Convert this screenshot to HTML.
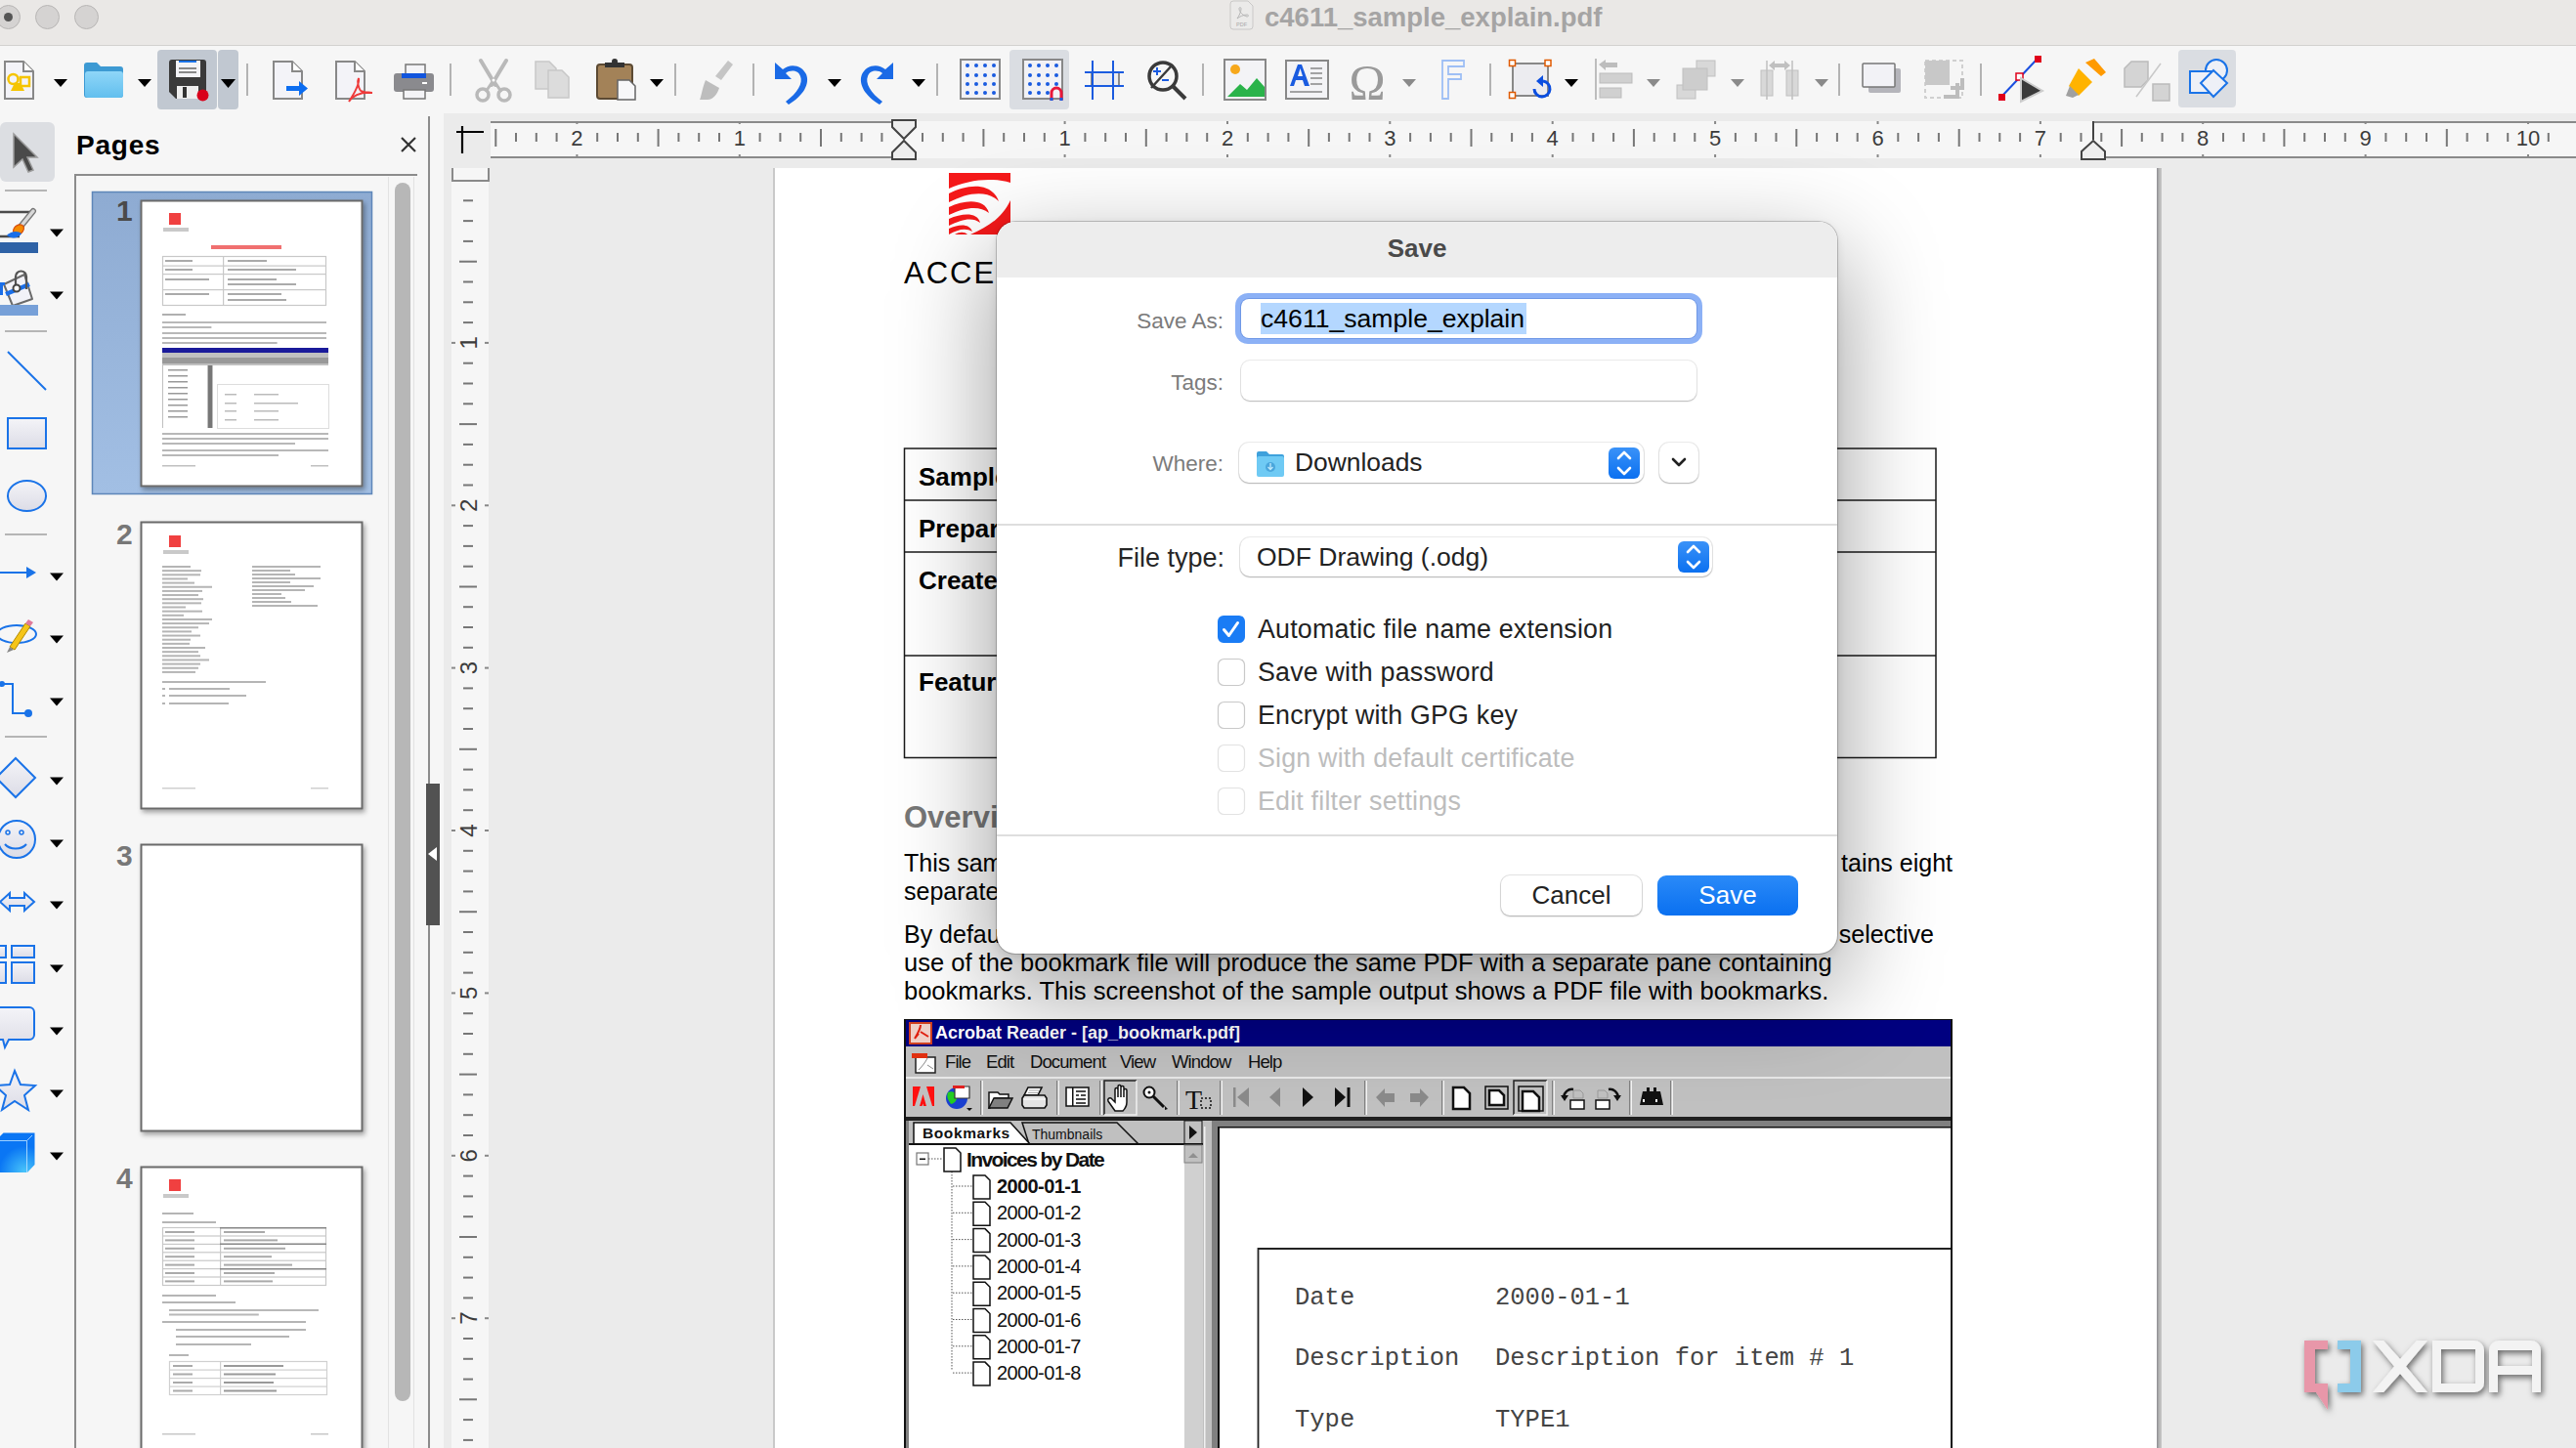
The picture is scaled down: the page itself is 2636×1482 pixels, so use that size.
<!DOCTYPE html>
<html><head><meta charset="utf-8">
<style>
*{margin:0;padding:0;box-sizing:border-box}
html,body{width:2636px;height:1482px;overflow:hidden;background:#ebebeb;font-family:"Liberation Sans",sans-serif}
.a{position:absolute}
svg{position:absolute;overflow:visible}
#titlebar{left:0;top:0;width:2636px;height:47px;background:#eae8e6;border-bottom:1px solid #d3d1cf}
.tl{width:25px;height:25px;border-radius:50%;background:#d5d3d2;border:1px solid #b8b6b5;top:5px}
#toolbar{left:0;top:47px;width:2636px;height:69px;background:#f6f6f6}
#sidebar{left:0;top:116px;width:454px;height:1366px;background:#f6f6f6}
#edit{left:454px;top:116px;width:2182px;height:1366px;background:#ebebeb}
#page{left:791px;top:172px;width:1416px;height:1320px;background:#fff;border-left:2px solid #c9c9c9}
#pager{left:2207px;top:172px;width:5px;height:1320px;background:linear-gradient(to right,#8c8b90,#b3b3b3 45%,#c9c9c9)}
</style></head><body>
<div id="titlebar" class="a"></div>
<div class="a tl" style="left:-4px"></div>
<div class="a" style="left:4px;top:13px;width:9px;height:9px;border-radius:50%;background:#555"></div>
<div class="a tl" style="left:36px"></div>
<div class="a tl" style="left:76px"></div>
<div class="a" style="left:1294px;top:1.5px;font-size:27.5px;font-weight:bold;color:#a5a4a4;letter-spacing:0px">c4611_sample_explain.pdf</div>
<div id="toolbar" class="a"></div>
<div id="sidebar" class="a"></div>
<div id="edit" class="a"></div>
<div id="page" class="a"></div>
<div id="pager" class="a"></div>

<svg class="a" style="left:0;top:0" width="2636" height="116" viewBox="0 0 2636 116">
<defs>
<linearGradient id="fold" x1="0" y1="0" x2="0" y2="1"><stop offset="0" stop-color="#8fd6f8"/><stop offset="1" stop-color="#62bfee"/></linearGradient>
<linearGradient id="cube" x1="0" y1="0" x2="1" y2="1"><stop offset="0" stop-color="#0a66e8"/><stop offset="1" stop-color="#4ab8ff"/></linearGradient>
</defs>
<!-- separators -->
<g fill="#b3b3b3">
<rect x="252" y="65" width="2" height="33"/><rect x="460" y="65" width="2" height="33"/>
<rect x="690" y="65" width="2" height="33"/><rect x="770" y="65" width="2" height="33"/>
<rect x="958" y="65" width="2" height="33"/><rect x="1230" y="65" width="2" height="33"/>
<rect x="1524" y="65" width="2" height="33"/><rect x="1881" y="65" width="2" height="33"/>
<rect x="2026" y="65" width="2" height="33"/>
</g>
<!-- highlights -->
<rect x="161" y="51" width="61" height="61" rx="4" fill="#c1c8d1"/>
<rect x="223" y="51" width="21" height="61" rx="4" fill="#c1c8d1"/>
<rect x="1033" y="51" width="61" height="61" rx="4" fill="#dadde2"/>
<rect x="2229" y="51" width="59" height="59" rx="4" fill="#dadde2"/>
<!-- dropdown arrows -->
<g fill="#000">
<path d="M55 81h14l-7 8z"/><path d="M141 81h14l-7 8z"/><path d="M226 81h15l-7.5 9z"/>
<path d="M665 81h14l-7 8z"/><path d="M847 81h14l-7 8z"/><path d="M933 81h14l-7 8z"/>
<path d="M1601 81h14l-7 8z"/>
</g>
<g fill="#8a8a8a">
<path d="M1435 81h14l-7 8z"/><path d="M1685 81h14l-7 8z"/><path d="M1771 81h14l-7 8z"/><path d="M1857 81h14l-7 8z"/>
</g>
<!-- new drawing -->
<path d="M5 63h19l10 10v28H5z" fill="#f3f3f8" stroke="#888" stroke-width="2"/>
<path d="M24 63v10h10" fill="#fff" stroke="#888" stroke-width="2"/>
<circle cx="13.5" cy="81" r="5" fill="none" stroke="#f5c400" stroke-width="2.5"/>
<rect x="21" y="79" width="9" height="9" fill="none" stroke="#f5c400" stroke-width="2.5"/>
<path d="M11 93l4-8h6l4 8z" fill="#f5c400"/>
<!-- open folder -->
<path d="M86 67a3 3 0 0 1 3-3h10l4 4h20a3 3 0 0 1 3 3v26a3 3 0 0 1-3 3H89a3 3 0 0 1-3-3z" fill="#3d9ad3"/>
<path d="M87 76a3 3 0 0 1 3-3h33a3 3 0 0 1 3 3v21a3 3 0 0 1-3 3H90a3 3 0 0 1-3-3z" fill="url(#fold)"/>
<!-- save floppy -->
<path d="M173 64a3 3 0 0 1 3-3h32a3 3 0 0 1 3 3v34a3 3 0 0 1-3 3h-28l-7-7z" fill="#3a3a3a"/>
<rect x="180" y="62" width="25" height="17" fill="#f3f3f6"/>
<rect x="183" y="62" width="18" height="2" fill="#1a73e8"/>
<rect x="183" y="69" width="18" height="2" fill="#888"/><rect x="183" y="73" width="18" height="2" fill="#888"/>
<rect x="181" y="88" width="22" height="13" fill="#eee"/>
<rect x="187" y="89" width="4" height="11" fill="#333"/>
<circle cx="207.5" cy="97.5" r="6" fill="#d9001b"/>
<!-- export -->
<path d="M280 63h19l10 10v28h-29z" fill="#f3f3f8" stroke="#888" stroke-width="2"/>
<path d="M299 63v10h10" fill="#fff" stroke="#888" stroke-width="2"/>
<path d="M293 88h13v-5l9 7.5-9 7.5v-5h-13z" fill="#0b6cf0"/>
<!-- export pdf -->
<path d="M344 63h19l10 10v28h-29z" fill="#f3f3f8" stroke="#888" stroke-width="2"/>
<path d="M363 63v10h10" fill="#fff" stroke="#888" stroke-width="2"/>
<path d="M367 80c-2 4 0 10 2 13M367 80c1 6-4 15-10 24M357 104c4-6 10-10 24-9M381 95c-5 0-10-1-12-2" fill="none" stroke="#ee3a3a" stroke-width="2"/>
<!-- print -->
<rect x="415" y="66" width="20" height="12" fill="#f4f4f7" stroke="#777" stroke-width="1.5"/>
<rect x="403" y="75" width="41" height="19" rx="3" fill="#8a8a8e"/>
<rect x="411" y="75" width="25" height="5" fill="#1155dd"/>
<rect x="413" y="92" width="22" height="9" fill="#f4f4f7" stroke="#777" stroke-width="1.5"/>
<rect x="432" y="84" width="5" height="2" fill="#fff"/>
<!-- cut -->
<g stroke="#b9b9b9" fill="none">
<path d="M492 62l15 25M518 62l-15 25" stroke-width="4" stroke-linecap="round"/><path d="M505 82l-8 12M505 82l8 12" stroke-width="3"/><circle cx="494" cy="97" r="6" stroke-width="3.5"/><circle cx="516" cy="97" r="6" stroke-width="3.5"/>
</g><circle cx="505" cy="82" r="1.5" fill="#fff"/>
<!-- copy -->
<path d="M548 63h14l7 7v21h-21z" fill="#dcdcdc" stroke="#c8c8c8" stroke-width="1.5"/>
<path d="M561 72h14l7 7v21h-21z" fill="#dcdcdc" stroke="#c8c8c8" stroke-width="1.5"/>
<!-- paste -->
<rect x="611" y="66" width="36" height="35" rx="3" fill="#a38258" stroke="#5c4a33" stroke-width="2"/>
<rect x="619" y="64" width="20" height="5" fill="#333"/>
<circle cx="629" cy="63" r="3" fill="#333"/>
<path d="M632 82h12l6 6v14h-18z" fill="#f7f7f9" stroke="#666" stroke-width="1.5"/>
<!-- clone brush -->
<path d="M745 62l5 4-12 16 -6-4z" fill="#c5c5c5"/>
<path d="M722 82l14 8c-2 6-6 12-12 12h-8c2-4 2-10 6-20z" fill="#bdbdbd"/>
<!-- undo -->
<path d="M793 64v17h17l-6-6c5-4 13-3 15 3 3 7-3 17-15 26l3 3c15-9 22-21 18-31-4-9-16-12-24-5z" fill="#1a6ae6"/>
<!-- redo -->
<path d="M914 64v17h-17l6-6c-5-4-13-3-15 3-3 7 3 17 15 26l-3 3c-15-9-22-21-18-31 4-9 16-12 24-5z" fill="#1a6ae6"/>
<!-- grid -->
<rect x="983" y="61" width="40" height="40" fill="#f2f2f6" stroke="#888" stroke-width="2"/>
<g fill="#1a5be0">
<circle cx="990" cy="67" r="2"/><circle cx="999" cy="67" r="2"/><circle cx="1008" cy="67" r="2"/><circle cx="1017" cy="67" r="2"/>
<circle cx="990" cy="77" r="2"/><circle cx="999" cy="77" r="2"/><circle cx="1008" cy="77" r="2"/><circle cx="1017" cy="77" r="2"/>
<circle cx="990" cy="86" r="2"/><circle cx="999" cy="86" r="2"/><circle cx="1008" cy="86" r="2"/><circle cx="1017" cy="86" r="2"/>
<circle cx="990" cy="95" r="2"/><circle cx="999" cy="95" r="2"/><circle cx="1008" cy="95" r="2"/><circle cx="1017" cy="95" r="2"/>
</g>
<!-- snap grid -->
<rect x="1047" y="61" width="40" height="40" fill="#f2f2f6" stroke="#888" stroke-width="2"/>
<g fill="#1a5be0">
<circle cx="1054" cy="67" r="2"/><circle cx="1063" cy="67" r="2"/><circle cx="1072" cy="67" r="2"/><circle cx="1081" cy="67" r="2"/>
<circle cx="1054" cy="77" r="2"/><circle cx="1063" cy="77" r="2"/><circle cx="1072" cy="77" r="2"/><circle cx="1081" cy="77" r="2"/>
<circle cx="1054" cy="86" r="2"/><circle cx="1063" cy="86" r="2"/><circle cx="1072" cy="86" r="2"/><circle cx="1081" cy="86" r="2"/>
<circle cx="1054" cy="95" r="2"/><circle cx="1063" cy="95" r="2"/><circle cx="1072" cy="95" r="2"/>
</g>
<path d="M1076 103v-8a5 5 0 0 1 10 0v8" fill="none" stroke="#e8173a" stroke-width="3"/>
<rect x="1074.5" y="100" width="3" height="3" fill="#1a5be0"/><rect x="1084.5" y="100" width="3" height="3" fill="#1a5be0"/>
<!-- helplines -->
<rect x="1117" y="74" width="28" height="14" fill="#ececf0" stroke="#8a8a8a" stroke-width="2"/>
<g stroke="#1a5be0" stroke-width="2"><path d="M1110 74h40M1110 88h40M1118 62v40M1139 62v40"/></g>
<!-- zoom -->
<circle cx="1190" cy="78" r="14" fill="none" stroke="#3a3a3a" stroke-width="3.5"/>
<path d="M1200 88l13 13" stroke="#3a3a3a" stroke-width="4"/>
<path d="M1178 90l22-24" stroke="#3a3a3a" stroke-width="2.5"/>
<path d="M1180 73h8M1184 69v8" stroke="#1a5be0" stroke-width="2"/><path d="M1189 82h7" stroke="#1a5be0" stroke-width="2"/>
<!-- image -->
<rect x="1253" y="61" width="42" height="41" fill="#f3f3f6" stroke="#888" stroke-width="2"/>
<circle cx="1264" cy="71" r="5" fill="#f7a81b"/>
<path d="M1256 99l13-13 7 6 10-12 8 9v10z" fill="#2ab34a"/>
<!-- textbox -->
<rect x="1316" y="62" width="43" height="39" fill="#f3f3f6" stroke="#888" stroke-width="2"/>
<path d="M1320 88l8-22h4l8 22h-5l-2-6h-7l-2 6zm8-10h5l-2.5-8z" fill="#1a5be0"/>
<g stroke="#888" stroke-width="1.5"><path d="M1341 70h12M1341 75h12M1341 80h12M1341 86h12M1320 94h33"/></g>
<!-- omega -->
<text x="1399" y="101" font-family="Liberation Serif" font-size="50" fill="#9a9a9a" text-anchor="middle">Ω</text>
<!-- fontwork -->
<path d="M1476 62h22v6h-16v8h13v5h-13v20h-6z" fill="none" stroke="#9ebff5" stroke-width="1.8"/>
<!-- rotate -->
<rect x="1548" y="65" width="36" height="33" fill="#ececf0" stroke="#888" stroke-width="2"/>
<g fill="#fff" stroke="#e05a00" stroke-width="1.5"><rect x="1544.5" y="61.5" width="6" height="6"/><rect x="1581" y="61.5" width="6" height="6"/><rect x="1544.5" y="94.5" width="6" height="6"/></g>
<path d="M1570 91A8 8 0 1 0 1579 83" fill="none" stroke="#0b4ee0" stroke-width="3"/>
<path d="M1572 83l7-6v12z" fill="#0b4ee0"/>
<!-- align -->
<rect x="1632" y="60" width="2" height="42" fill="#bdbdbd"/>
<path d="M1636 66l7-5v3h12v5h-12v3z" fill="#bdbdbd"/>
<rect x="1637" y="75" width="33" height="10" fill="#d0d0d0" stroke="#bbb"/>
<rect x="1637" y="90" width="22" height="10" fill="#d0d0d0" stroke="#bbb"/>
<!-- arrange -->
<rect x="1736" y="62" width="19" height="16" fill="#d8d8d8" stroke="#c0c0c0"/>
<rect x="1716" y="87" width="19" height="14" fill="#d8d8d8" stroke="#c0c0c0"/>
<rect x="1722" y="70" width="25" height="22" fill="#cdcdcd" stroke="#c0c0c0"/>
<!-- distribute -->
<rect x="1802" y="72" width="12" height="26" fill="#d8d8d8" stroke="#c0c0c0"/>
<rect x="1828" y="72" width="12" height="26" fill="#d8d8d8" stroke="#c0c0c0"/>
<path d="M1808 62v40M1834 62v40" stroke="#c0c0c0" stroke-width="1.5"/>
<path d="M1810 67l6-5v3h10v-3l6 5-6 5v-3h-10v3z" fill="#c0c0c0"/>
<!-- shadow -->
<rect x="1912" y="70" width="33" height="25" rx="2" fill="#b5b5bb"/>
<rect x="1906" y="65" width="33" height="24" rx="1" fill="#f2f2f6" stroke="#777" stroke-width="1.5"/>
<!-- crop -->
<rect x="1970" y="62" width="38" height="38" fill="none" stroke="#d0d0d0" stroke-width="2" stroke-dasharray="4 3"/>
<rect x="1970" y="62" width="25" height="25" fill="#c8c8c8"/>
<path d="M1996 90h12v-10M2003 85v14h-14" fill="none" stroke="#bdbdbd" stroke-width="4"/>
<!-- points -->
<path d="M2048 99l36-38" stroke="#1a4fe0" stroke-width="2"/>
<rect x="2045" y="96" width="7" height="7" fill="#e0001b"/><rect x="2082" y="57" width="7" height="7" fill="#e0001b"/>
<rect x="2063" y="75" width="7" height="7" fill="#fff" stroke="#e0001b" stroke-width="1.5"/>
<path d="M2068 80l22 13-22 11z" fill="#3a3a3a" stroke="#ccc" stroke-width="2"/>
<!-- highlighter -->
<path d="M2134 64l9-4 12 14-5 4z" fill="#ff9a00"/>
<path d="M2127 70l14 14-14 14-10-10z" fill="#ffb300"/>
<path d="M2118 88l9 9-6 3-7-2z" fill="#a0a0a0"/>
<!-- 3d -->
<path d="M2174 70l7-7h17v19l-7 7h-17z" fill="#d4d4d4" stroke="#bbb" stroke-width="1.5"/>
<path d="M2186 99l25-34" stroke="#c8c8c8" stroke-width="1.5"/>
<rect x="2203" y="86" width="17" height="17" fill="#d4d4d4" stroke="#bbb" stroke-width="1.5"/>
<!-- shapes -->
<circle cx="2268" cy="72" r="11" fill="#eef0f7" stroke="#1a73e8" stroke-width="2"/>
<rect x="2241" y="73" width="24" height="22" fill="#eef0f7" stroke="#1a73e8" stroke-width="2"/>
<path d="M2265 72l14 13-14 14-13-14z" fill="#eef0f7" stroke="#1a73e8" stroke-width="2"/>
</svg>

<!-- left tool column -->
<svg style="left:0;top:116px" width="454" height="1366" viewBox="0 116 454 1366">
<defs>
<linearGradient id="shp" x1="0" y1="0" x2="0" y2="1"><stop offset="0" stop-color="#f4f4f8"/><stop offset="1" stop-color="#dcdce6"/></linearGradient>
<linearGradient id="cb" x1="0" y1="1" x2="1" y2="0"><stop offset="0" stop-color="#5ac8ff"/><stop offset="0.5" stop-color="#1a82ff"/><stop offset="1" stop-color="#0a5ee0"/></linearGradient>
<linearGradient id="pg1" x1="0" y1="0" x2="0" y2="1"><stop offset="0" stop-color="#8eabd2"/><stop offset="1" stop-color="#a2bfe4"/></linearGradient>
</defs>
<rect x="0" y="125" width="56" height="61" rx="6" fill="#dcdee2"/>
<path d="M14 137l24 24h-10l6 13-5 2-6-13-9 8z" fill="#4a4a4a" stroke="#9a9a9a" stroke-width="1.5"/>
<g fill="#b5b5b5"><rect x="5" y="194" width="43" height="2"/><rect x="5" y="338" width="43" height="2"/><rect x="5" y="546" width="43" height="2"/><rect x="5" y="753" width="43" height="2"/></g>
<!-- line color -->
<path d="M-2 217H34M-2 242H20" stroke="#4a4a4a" stroke-width="2.6" fill="none"/>
<path d="M34 216L21 232" stroke="#777" stroke-width="6" stroke-linecap="round"/>
<path d="M34 216L21 232" stroke="#d8d8d8" stroke-width="3.5" stroke-linecap="round"/>
<ellipse cx="19" cy="235" rx="6" ry="4.5" transform="rotate(-40 19 235)" fill="#f58a00" stroke="#d84a00" stroke-width="1.2"/>
<path d="M7 241C11 236 19 236 22 239C19 244 12 245 7 241Z" fill="#1a6ee8"/>
<rect x="0" y="248" width="39" height="11" fill="#2e62a6"/>
<!-- fill color -->
<path d="M4 291L25 281L33 306L13 313Z" fill="#f2f2f8" stroke="#6a6a6a" stroke-width="2" stroke-linejoin="round"/>
<path d="M6 301L30 291" stroke="#1a6ee8" stroke-width="4.5"/>
<path d="M16 292V283a5.5 5.5 0 0 1 11 0V296" fill="none" stroke="#555" stroke-width="2.2"/>
<circle cx="17" cy="295" r="3.5" fill="#fff" stroke="#444" stroke-width="2"/>
<path d="M0 289h5v3h-2v10h-3z" fill="#1a6ee8"/>
<rect x="0" y="312" width="39" height="11" fill="#77a0d8"/>
<!-- line -->
<path d="M8 360l39 39" stroke="#1a73e8" stroke-width="2"/>
<!-- rect -->
<rect x="8" y="428" width="39" height="31" fill="url(#shp)" stroke="#1a73e8" stroke-width="2"/>
<!-- ellipse -->
<ellipse cx="27.5" cy="507.5" rx="19.5" ry="15.5" fill="url(#shp)" stroke="#1a73e8" stroke-width="2"/>
<!-- arrow line -->
<path d="M0 586h30" stroke="#1a73e8" stroke-width="2"/><path d="M27 580l10 6-10 6z" fill="#1a73e8"/>
<!-- freeform -->
<ellipse cx="17" cy="649" rx="20" ry="9" fill="none" stroke="#1a73e8" stroke-width="2"/>
<path d="M10 662l16-24 5 3-16 24z" fill="#f5c518" stroke="#b08800" stroke-width="1"/>
<path d="M26 638l3-4 5 3-3 4z" fill="#e07a9a"/>
<path d="M10 662l-3 6 7-3z" fill="#888"/>
<!-- connector -->
<path d="M2 700h11v30h16" fill="none" stroke="#1a73e8" stroke-width="2"/>
<circle cx="2" cy="700" r="3" fill="#1a73e8"/><circle cx="29" cy="730" r="4" fill="#1a73e8"/>
<!-- diamond -->
<path d="M16 776l20 20-20 20-20-20z" fill="url(#shp)" stroke="#1a73e8" stroke-width="2"/>
<!-- smiley -->
<circle cx="17" cy="859" r="19" fill="url(#shp)" stroke="#1a73e8" stroke-width="2"/>
<circle cx="8" cy="852" r="2" fill="none" stroke="#1a73e8" stroke-width="1.5"/><circle cx="22" cy="852" r="2" fill="none" stroke="#1a73e8" stroke-width="1.5"/>
<path d="M5 864c5 6 17 6 22 0" fill="none" stroke="#1a73e8" stroke-width="2"/>
<!-- double arrow -->
<path d="M0 923l10-9v5h15v-5l10 9-10 9v-5h-15v5z" fill="url(#shp)" stroke="#1a73e8" stroke-width="2"/>
<!-- flowchart -->
<g fill="url(#shp)" stroke="#1a73e8" stroke-width="2"><rect x="-2" y="968" width="8" height="12"/><rect x="12" y="968" width="23" height="12"/><rect x="-2" y="985" width="8" height="21"/><rect x="12" y="985" width="23" height="21"/></g>
<!-- callout -->
<path d="M0 1031h30a5 5 0 0 1 5 5v23a5 5 0 0 1-5 5h-21l-4 8-2-8h-3" fill="url(#shp)" stroke="#1a73e8" stroke-width="2"/>
<!-- star -->
<path d="M15 1096l6 14 15 1-11 10 4 15-14-9-13 9 4-15-11-10 15-1z" fill="url(#shp)" stroke="#1a73e8" stroke-width="2"/>
<!-- cube -->
<radialGradient id="cbr" cx="25" cy="1199" r="26" gradientUnits="userSpaceOnUse"><stop offset="0" stop-color="#48c4fa"/><stop offset="1" stop-color="#0a76f4"/></radialGradient>
<path d="M0 1163L3.5 1159.5H35.5V1192L28 1200H0Z" fill="url(#cbr)"/>
<path d="M0 1167.5H27.5V1200M27.5 1167.5L33 1162" fill="none" stroke="#b8e0ff" stroke-width="1" opacity="0.85"/>
<g fill="#000">
<path d="M51 234.5h14l-7 8z"/><path d="M51 298.5h14l-7 8z"/><path d="M51 586.5h14l-7 8z"/><path d="M51 650.5h14l-7 8z"/>
<path d="M51 714.5h14l-7 8z"/><path d="M51 795.5h14l-7 8z"/><path d="M51 859.5h14l-7 8z"/><path d="M51 922.5h14l-7 8z"/>
<path d="M51 987.5h14l-7 8z"/><path d="M51 1051.5h14l-7 8z"/><path d="M51 1115.5h14l-7 8z"/><path d="M51 1179.5h14l-7 8z"/>
</g>
<!-- Pages panel -->
<path d="M427 179H77V1482" fill="none" stroke="#8c8c8c" stroke-width="2"/>
<rect x="397" y="181" width="1" height="1301" fill="#e2e2e2"/>
<rect x="423" y="181" width="1" height="1301" fill="#e2e2e2"/>
<rect x="404" y="187" width="16" height="1247" rx="8" fill="#b7b7b7"/>
<rect x="438" y="119" width="2" height="1363" fill="#8c8c8c"/>
<rect x="436" y="802" width="14" height="145" fill="#525252"/>
<path d="M438 874l9-7v14z" fill="#fff"/>
<path d="M411 141l14 14M425 141l-14 14" stroke="#333" stroke-width="2.2"/>
<!-- page 1 selection -->
<rect x="94.5" y="196.5" width="286" height="309" fill="url(#pg1)" stroke="#5e86b9" stroke-width="1.5"/>
</svg>
<div class="a" style="left:78px;top:133px;font-size:28px;font-weight:bold;color:#000;letter-spacing:0.8px">Pages</div>
<div class="a" style="left:119px;top:199px;font-size:30px;font-weight:bold;color:#4a4a4a">1</div>
<div class="a" style="left:119px;top:530px;font-size:30px;font-weight:bold;color:#777">2</div>
<div class="a" style="left:119px;top:859px;font-size:30px;font-weight:bold;color:#777">3</div>
<div class="a" style="left:119px;top:1189px;font-size:30px;font-weight:bold;color:#777">4</div>

<svg style="left:0;top:0" width="454" height="1482" viewBox="0 0 454 1482">
<defs><filter id="tsh" x="-10%" y="-10%" width="130%" height="130%"><feDropShadow dx="2" dy="3" stdDeviation="2.5" flood-color="#000" flood-opacity="0.35"/></filter></defs>
<rect x="144.5" y="205.5" width="226" height="292" fill="#fff" stroke="#6b6b6b" stroke-width="2" filter="url(#tsh)"/>
<rect x="173" y="218" width="12" height="12" fill="#f04040"/>
<rect x="167" y="233" width="26" height="4" fill="#c9c9c9"/>
<rect x="216" y="251" width="72" height="4" fill="#f07070"/>
<rect x="166.5" y="262.5" width="167" height="50" fill="none" stroke="#c8c8c8" stroke-width="1.2"/>
<rect x="166" y="271.5" width="168" height="1.2" fill="#c8c8c8"/>
<rect x="166" y="280" width="168" height="1.2" fill="#c8c8c8"/>
<rect x="166" y="296" width="168" height="1.2" fill="#c8c8c8"/>
<rect x="228" y="262" width="1.2" height="50" fill="#c8c8c8"/>
<rect x="169" y="266" width="28" height="2" fill="#aaa"/>
<rect x="233" y="266" width="40" height="2" fill="#aaa"/>
<rect x="169" y="275" width="28" height="2" fill="#aaa"/>
<rect x="233" y="275" width="70" height="2" fill="#aaa"/>
<rect x="169" y="285" width="45" height="2" fill="#aaa"/>
<rect x="233" y="285" width="50" height="2" fill="#aaa"/>
<rect x="169" y="300" width="45" height="2" fill="#aaa"/>
<rect x="233" y="300" width="55" height="2" fill="#aaa"/>
<rect x="233" y="290" width="70" height="2" fill="#aaa"/>
<rect x="233" y="306" width="60" height="2" fill="#aaa"/>
<rect x="166" y="321" width="24" height="2" fill="#b0b0b0"/>
<rect x="166" y="329" width="168" height="2" fill="#b8b8b8"/>
<rect x="166" y="334" width="50.4" height="2" fill="#b8b8b8"/>
<rect x="166" y="340" width="168" height="2" fill="#b8b8b8"/>
<rect x="166" y="345" width="168" height="2" fill="#b8b8b8"/>
<rect x="166" y="350" width="117.6" height="2" fill="#b8b8b8"/>
<rect x="166" y="356" width="170" height="82" fill="#c0c0c0"/>
<rect x="166" y="356" width="170" height="5" fill="#1a1a9a"/>
<rect x="166" y="366" width="170" height="6" fill="#999"/>
<rect x="167" y="374" width="45" height="64" fill="#fff"/>
<rect x="213" y="374" width="4" height="64" fill="#777"/>
<rect x="218" y="374" width="118" height="64" fill="#fff"/>
<rect x="222.5" y="393.5" width="114" height="45" fill="none" stroke="#ddd" stroke-width="1"/>
<rect x="172" y="378" width="20" height="1.5" fill="#999"/>
<rect x="172" y="384" width="20" height="1.5" fill="#999"/>
<rect x="172" y="390" width="20" height="1.5" fill="#999"/>
<rect x="172" y="396" width="20" height="1.5" fill="#999"/>
<rect x="172" y="402" width="20" height="1.5" fill="#999"/>
<rect x="172" y="408" width="20" height="1.5" fill="#999"/>
<rect x="172" y="414" width="20" height="1.5" fill="#999"/>
<rect x="172" y="420" width="20" height="1.5" fill="#999"/>
<rect x="172" y="426" width="20" height="1.5" fill="#999"/>
<rect x="230" y="403" width="12" height="1.5" fill="#bbb"/>
<rect x="260" y="403" width="25" height="1.5" fill="#bbb"/>
<rect x="230" y="412" width="12" height="1.5" fill="#bbb"/>
<rect x="260" y="412" width="45" height="1.5" fill="#bbb"/>
<rect x="230" y="420" width="12" height="1.5" fill="#bbb"/>
<rect x="260" y="420" width="25" height="1.5" fill="#bbb"/>
<rect x="230" y="429" width="12" height="1.5" fill="#bbb"/>
<rect x="260" y="429" width="25" height="1.5" fill="#bbb"/>
<rect x="166" y="443" width="170" height="2" fill="#b8b8b8"/>
<rect x="166" y="448" width="170" height="2" fill="#b8b8b8"/>
<rect x="166" y="453" width="136.0" height="2" fill="#b8b8b8"/>
<rect x="166" y="460" width="170" height="2" fill="#b8b8b8"/>
<rect x="166" y="465" width="118.99999999999999" height="2" fill="#b8b8b8"/>
<rect x="166" y="476" width="34" height="1.5" fill="#c0c0c0"/>
<rect x="318" y="476" width="18" height="1.5" fill="#c0c0c0"/>
<rect x="144.5" y="534.5" width="226" height="293" fill="#fff" stroke="#6b6b6b" stroke-width="2" filter="url(#tsh)"/>
<rect x="173" y="548" width="12" height="12" fill="#f04040"/>
<rect x="167" y="563" width="26" height="4" fill="#c9c9c9"/>
<rect x="166" y="579.0" width="29" height="2" fill="#b5b5b5"/>
<rect x="166" y="583.15" width="40" height="2" fill="#b5b5b5"/>
<rect x="166" y="587.3" width="39" height="2" fill="#b5b5b5"/>
<rect x="166" y="591.45" width="26" height="2" fill="#b5b5b5"/>
<rect x="166" y="595.6" width="33" height="2" fill="#b5b5b5"/>
<rect x="166" y="599.75" width="51" height="2" fill="#b5b5b5"/>
<rect x="166" y="603.9" width="41" height="2" fill="#b5b5b5"/>
<rect x="166" y="608.05" width="37" height="2" fill="#b5b5b5"/>
<rect x="166" y="612.2" width="42" height="2" fill="#b5b5b5"/>
<rect x="166" y="616.35" width="40" height="2" fill="#b5b5b5"/>
<rect x="166" y="620.5" width="24" height="2" fill="#b5b5b5"/>
<rect x="166" y="624.65" width="41" height="2" fill="#b5b5b5"/>
<rect x="166" y="628.8" width="22" height="2" fill="#b5b5b5"/>
<rect x="166" y="632.95" width="51" height="2" fill="#b5b5b5"/>
<rect x="166" y="637.1" width="48" height="2" fill="#b5b5b5"/>
<rect x="166" y="641.25" width="37" height="2" fill="#b5b5b5"/>
<rect x="166" y="645.4" width="30" height="2" fill="#b5b5b5"/>
<rect x="166" y="649.55" width="39" height="2" fill="#b5b5b5"/>
<rect x="166" y="653.7" width="29" height="2" fill="#b5b5b5"/>
<rect x="166" y="657.85" width="28" height="2" fill="#b5b5b5"/>
<rect x="166" y="662.0" width="44" height="2" fill="#b5b5b5"/>
<rect x="166" y="666.15" width="37" height="2" fill="#b5b5b5"/>
<rect x="166" y="670.3" width="39" height="2" fill="#b5b5b5"/>
<rect x="166" y="674.45" width="48" height="2" fill="#b5b5b5"/>
<rect x="166" y="678.6" width="39" height="2" fill="#b5b5b5"/>
<rect x="166" y="682.75" width="37" height="2" fill="#b5b5b5"/>
<rect x="166" y="686.9" width="34" height="2" fill="#b5b5b5"/>
<rect x="258" y="579" width="70" height="2" fill="#b5b5b5"/>
<rect x="258" y="583" width="39" height="2" fill="#b5b5b5"/>
<rect x="258" y="587" width="44" height="2" fill="#b5b5b5"/>
<rect x="258" y="591" width="70" height="2" fill="#b5b5b5"/>
<rect x="258" y="595" width="39" height="2" fill="#b5b5b5"/>
<rect x="258" y="599" width="63" height="2" fill="#b5b5b5"/>
<rect x="258" y="603" width="54" height="2" fill="#b5b5b5"/>
<rect x="258" y="607" width="30" height="2" fill="#b5b5b5"/>
<rect x="258" y="611" width="34" height="2" fill="#b5b5b5"/>
<rect x="258" y="615" width="40" height="2" fill="#b5b5b5"/>
<rect x="258" y="619" width="67" height="2" fill="#b5b5b5"/>
<rect x="166" y="697" width="106" height="2" fill="#b5b5b5"/>
<rect x="166" y="704" width="3" height="2" fill="#b5b5b5"/>
<rect x="173" y="704" width="62" height="2" fill="#b5b5b5"/>
<rect x="166" y="711" width="3" height="2" fill="#b5b5b5"/>
<rect x="173" y="711" width="79" height="2" fill="#b5b5b5"/>
<rect x="166" y="719" width="3" height="2" fill="#b5b5b5"/>
<rect x="173" y="719" width="61" height="2" fill="#b5b5b5"/>
<rect x="166" y="806" width="34" height="1.5" fill="#d0d0d0"/>
<rect x="318" y="806" width="18" height="1.5" fill="#d0d0d0"/>
<rect x="144.5" y="864.5" width="226" height="293" fill="#fff" stroke="#6b6b6b" stroke-width="2" filter="url(#tsh)"/>
<rect x="144.5" y="1194.5" width="226" height="300" fill="#fff" stroke="#6b6b6b" stroke-width="2" filter="url(#tsh)"/>
<rect x="173" y="1207" width="12" height="12" fill="#f04040"/>
<rect x="167" y="1222" width="26" height="4" fill="#c9c9c9"/>
<rect x="166" y="1241" width="32" height="2" fill="#b5b5b5"/>
<rect x="166" y="1250" width="55" height="2" fill="#b5b5b5"/>
<rect x="166.5" y="1256.5" width="167" height="59" fill="none" stroke="#c8c8c8" stroke-width="1.2"/>
<rect x="225" y="1256" width="1.2" height="59" fill="#c8c8c8"/>
<rect x="166" y="1264.4" width="168" height="1.2" fill="#c8c8c8"/>
<rect x="166" y="1272.8" width="168" height="1.2" fill="#c8c8c8"/>
<rect x="166" y="1281.2" width="168" height="1.2" fill="#c8c8c8"/>
<rect x="166" y="1289.6" width="168" height="1.2" fill="#c8c8c8"/>
<rect x="166" y="1298.0" width="168" height="1.2" fill="#c8c8c8"/>
<rect x="166" y="1306.4" width="168" height="1.2" fill="#c8c8c8"/>
<rect x="225" y="1256" width="109" height="1.5" fill="#888"/>
<rect x="225" y="1272.5" width="109" height="1.5" fill="#888"/>
<rect x="225" y="1298" width="109" height="1.5" fill="#888"/>
<rect x="169" y="1260.0" width="30" height="2" fill="#aaa"/>
<rect x="229" y="1260.0" width="42" height="2" fill="#aaa"/>
<rect x="169" y="1268.4" width="30" height="2" fill="#aaa"/>
<rect x="229" y="1268.4" width="55" height="2" fill="#aaa"/>
<rect x="169" y="1276.8" width="30" height="2" fill="#aaa"/>
<rect x="229" y="1276.8" width="63" height="2" fill="#aaa"/>
<rect x="169" y="1285.2" width="30" height="2" fill="#aaa"/>
<rect x="229" y="1285.2" width="49" height="2" fill="#aaa"/>
<rect x="169" y="1293.6" width="30" height="2" fill="#aaa"/>
<rect x="229" y="1293.6" width="70" height="2" fill="#aaa"/>
<rect x="169" y="1302.0" width="30" height="2" fill="#aaa"/>
<rect x="229" y="1302.0" width="52" height="2" fill="#aaa"/>
<rect x="169" y="1310.4" width="30" height="2" fill="#aaa"/>
<rect x="229" y="1310.4" width="50" height="2" fill="#aaa"/>
<rect x="166" y="1325" width="55" height="2" fill="#b5b5b5"/>
<rect x="166" y="1332" width="75" height="2" fill="#b5b5b5"/>
<rect x="173" y="1340.0" width="153" height="2" fill="#b8b8b8"/>
<rect x="173" y="1344.5" width="91.8" height="2" fill="#b8b8b8"/>
<rect x="166" y="1352" width="147" height="2" fill="#b5b5b5"/>
<rect x="180" y="1360" width="133" height="2" fill="#b5b5b5"/>
<rect x="180" y="1367" width="116" height="2" fill="#b5b5b5"/>
<rect x="180" y="1375" width="77" height="2" fill="#b5b5b5"/>
<rect x="173" y="1386" width="20" height="2" fill="#b5b5b5"/>
<rect x="173.5" y="1393.5" width="161" height="34" fill="none" stroke="#d0d0d0" stroke-width="1.2"/>
<rect x="225" y="1393" width="1.2" height="35" fill="#d0d0d0"/>
<rect x="173" y="1401.5" width="162" height="1.2" fill="#d0d0d0"/>
<rect x="173" y="1410.0" width="162" height="1.2" fill="#d0d0d0"/>
<rect x="173" y="1418.5" width="162" height="1.2" fill="#d0d0d0"/>
<rect x="177" y="1397.0" width="20" height="2" fill="#aaa"/>
<rect x="229" y="1397.0" width="61" height="2" fill="#999"/>
<rect x="177" y="1405.5" width="20" height="2" fill="#aaa"/>
<rect x="229" y="1405.5" width="53" height="2" fill="#999"/>
<rect x="177" y="1414.0" width="20" height="2" fill="#aaa"/>
<rect x="229" y="1414.0" width="51" height="2" fill="#999"/>
<rect x="177" y="1422.5" width="20" height="2" fill="#aaa"/>
<rect x="229" y="1422.5" width="54" height="2" fill="#999"/>
<rect x="166" y="1467" width="34" height="1.5" fill="#c8c8c8"/>
<rect x="318" y="1467" width="18" height="1.5" fill="#c8c8c8"/>
</svg>
<svg style="left:0;top:0" width="2636" height="1482" viewBox="0 0 2636 1482">
<path d="M473 129v28M467 135h28" stroke="#000" stroke-width="2.2" fill="none"/>
<rect x="502" y="124" width="2134" height="38" fill="#f6f6f6"/>
<path d="M502 125H913M2142 125H2636M502 161H913M2154 161H2636" stroke="#8a8a8a" stroke-width="2"/>
<rect x="506.3" y="132" width="2" height="18" fill="#777"/>
<rect x="527.0" y="136" width="2" height="9" fill="#777"/>
<rect x="547.8" y="136" width="2" height="9" fill="#777"/>
<rect x="568.6" y="136" width="2" height="9" fill="#777"/>
<text x="590.4" y="149" font-size="22" fill="#3c3c3c" text-anchor="middle" font-family="Liberation Sans">2</text>
<rect x="589.4" y="124" width="2" height="3" fill="#888"/><rect x="589.4" y="158" width="2" height="3" fill="#888"/>
<rect x="610.2" y="136" width="2" height="9" fill="#777"/>
<rect x="631.0" y="136" width="2" height="9" fill="#777"/>
<rect x="651.8" y="136" width="2" height="9" fill="#777"/>
<rect x="672.6" y="132" width="2" height="18" fill="#777"/>
<rect x="693.4" y="136" width="2" height="9" fill="#777"/>
<rect x="714.2" y="136" width="2" height="9" fill="#777"/>
<rect x="735.0" y="136" width="2" height="9" fill="#777"/>
<text x="756.8" y="149" font-size="22" fill="#3c3c3c" text-anchor="middle" font-family="Liberation Sans">1</text>
<rect x="755.8" y="124" width="2" height="3" fill="#888"/><rect x="755.8" y="158" width="2" height="3" fill="#888"/>
<rect x="776.6" y="136" width="2" height="9" fill="#777"/>
<rect x="797.4" y="136" width="2" height="9" fill="#777"/>
<rect x="818.2" y="136" width="2" height="9" fill="#777"/>
<rect x="839.0" y="132" width="2" height="18" fill="#777"/>
<rect x="859.8" y="136" width="2" height="9" fill="#777"/>
<rect x="880.6" y="136" width="2" height="9" fill="#777"/>
<rect x="901.4" y="136" width="2" height="9" fill="#777"/>
<rect x="943.0" y="136" width="2" height="9" fill="#777"/>
<rect x="963.8" y="136" width="2" height="9" fill="#777"/>
<rect x="984.6" y="136" width="2" height="9" fill="#777"/>
<rect x="1005.4" y="132" width="2" height="18" fill="#777"/>
<rect x="1026.2" y="136" width="2" height="9" fill="#777"/>
<rect x="1047.0" y="136" width="2" height="9" fill="#777"/>
<rect x="1067.8" y="136" width="2" height="9" fill="#777"/>
<text x="1089.6" y="149" font-size="22" fill="#3c3c3c" text-anchor="middle" font-family="Liberation Sans">1</text>
<rect x="1088.6" y="124" width="2" height="3" fill="#888"/><rect x="1088.6" y="158" width="2" height="3" fill="#888"/>
<rect x="1109.4" y="136" width="2" height="9" fill="#777"/>
<rect x="1130.2" y="136" width="2" height="9" fill="#777"/>
<rect x="1151.0" y="136" width="2" height="9" fill="#777"/>
<rect x="1171.8" y="132" width="2" height="18" fill="#777"/>
<rect x="1192.6" y="136" width="2" height="9" fill="#777"/>
<rect x="1213.4" y="136" width="2" height="9" fill="#777"/>
<rect x="1234.2" y="136" width="2" height="9" fill="#777"/>
<text x="1256.0" y="149" font-size="22" fill="#3c3c3c" text-anchor="middle" font-family="Liberation Sans">2</text>
<rect x="1255.0" y="124" width="2" height="3" fill="#888"/><rect x="1255.0" y="158" width="2" height="3" fill="#888"/>
<rect x="1275.8" y="136" width="2" height="9" fill="#777"/>
<rect x="1296.6" y="136" width="2" height="9" fill="#777"/>
<rect x="1317.4" y="136" width="2" height="9" fill="#777"/>
<rect x="1338.2" y="132" width="2" height="18" fill="#777"/>
<rect x="1358.9" y="136" width="2" height="9" fill="#777"/>
<rect x="1379.7" y="136" width="2" height="9" fill="#777"/>
<rect x="1400.5" y="136" width="2" height="9" fill="#777"/>
<text x="1422.3" y="149" font-size="22" fill="#3c3c3c" text-anchor="middle" font-family="Liberation Sans">3</text>
<rect x="1421.3" y="124" width="2" height="3" fill="#888"/><rect x="1421.3" y="158" width="2" height="3" fill="#888"/>
<rect x="1442.1" y="136" width="2" height="9" fill="#777"/>
<rect x="1462.9" y="136" width="2" height="9" fill="#777"/>
<rect x="1483.7" y="136" width="2" height="9" fill="#777"/>
<rect x="1504.5" y="132" width="2" height="18" fill="#777"/>
<rect x="1525.3" y="136" width="2" height="9" fill="#777"/>
<rect x="1546.1" y="136" width="2" height="9" fill="#777"/>
<rect x="1566.9" y="136" width="2" height="9" fill="#777"/>
<text x="1588.7" y="149" font-size="22" fill="#3c3c3c" text-anchor="middle" font-family="Liberation Sans">4</text>
<rect x="1587.7" y="124" width="2" height="3" fill="#888"/><rect x="1587.7" y="158" width="2" height="3" fill="#888"/>
<rect x="1608.5" y="136" width="2" height="9" fill="#777"/>
<rect x="1629.3" y="136" width="2" height="9" fill="#777"/>
<rect x="1650.1" y="136" width="2" height="9" fill="#777"/>
<rect x="1670.9" y="132" width="2" height="18" fill="#777"/>
<rect x="1691.7" y="136" width="2" height="9" fill="#777"/>
<rect x="1712.5" y="136" width="2" height="9" fill="#777"/>
<rect x="1733.3" y="136" width="2" height="9" fill="#777"/>
<text x="1755.1" y="149" font-size="22" fill="#3c3c3c" text-anchor="middle" font-family="Liberation Sans">5</text>
<rect x="1754.1" y="124" width="2" height="3" fill="#888"/><rect x="1754.1" y="158" width="2" height="3" fill="#888"/>
<rect x="1774.9" y="136" width="2" height="9" fill="#777"/>
<rect x="1795.7" y="136" width="2" height="9" fill="#777"/>
<rect x="1816.5" y="136" width="2" height="9" fill="#777"/>
<rect x="1837.3" y="132" width="2" height="18" fill="#777"/>
<rect x="1858.1" y="136" width="2" height="9" fill="#777"/>
<rect x="1878.9" y="136" width="2" height="9" fill="#777"/>
<rect x="1899.7" y="136" width="2" height="9" fill="#777"/>
<text x="1921.5" y="149" font-size="22" fill="#3c3c3c" text-anchor="middle" font-family="Liberation Sans">6</text>
<rect x="1920.5" y="124" width="2" height="3" fill="#888"/><rect x="1920.5" y="158" width="2" height="3" fill="#888"/>
<rect x="1941.3" y="136" width="2" height="9" fill="#777"/>
<rect x="1962.1" y="136" width="2" height="9" fill="#777"/>
<rect x="1982.9" y="136" width="2" height="9" fill="#777"/>
<rect x="2003.7" y="132" width="2" height="18" fill="#777"/>
<rect x="2024.5" y="136" width="2" height="9" fill="#777"/>
<rect x="2045.3" y="136" width="2" height="9" fill="#777"/>
<rect x="2066.1" y="136" width="2" height="9" fill="#777"/>
<text x="2087.9" y="149" font-size="22" fill="#3c3c3c" text-anchor="middle" font-family="Liberation Sans">7</text>
<rect x="2086.9" y="124" width="2" height="3" fill="#888"/><rect x="2086.9" y="158" width="2" height="3" fill="#888"/>
<rect x="2107.7" y="136" width="2" height="9" fill="#777"/>
<rect x="2128.5" y="136" width="2" height="9" fill="#777"/>
<rect x="2149.3" y="136" width="2" height="9" fill="#777"/>
<rect x="2170.1" y="132" width="2" height="18" fill="#777"/>
<rect x="2190.8" y="136" width="2" height="9" fill="#777"/>
<rect x="2211.6" y="136" width="2" height="9" fill="#777"/>
<rect x="2232.4" y="136" width="2" height="9" fill="#777"/>
<text x="2254.2" y="149" font-size="22" fill="#3c3c3c" text-anchor="middle" font-family="Liberation Sans">8</text>
<rect x="2253.2" y="124" width="2" height="3" fill="#888"/><rect x="2253.2" y="158" width="2" height="3" fill="#888"/>
<rect x="2274.0" y="136" width="2" height="9" fill="#777"/>
<rect x="2294.8" y="136" width="2" height="9" fill="#777"/>
<rect x="2315.6" y="136" width="2" height="9" fill="#777"/>
<rect x="2336.4" y="132" width="2" height="18" fill="#777"/>
<rect x="2357.2" y="136" width="2" height="9" fill="#777"/>
<rect x="2378.0" y="136" width="2" height="9" fill="#777"/>
<rect x="2398.8" y="136" width="2" height="9" fill="#777"/>
<text x="2420.6" y="149" font-size="22" fill="#3c3c3c" text-anchor="middle" font-family="Liberation Sans">9</text>
<rect x="2419.6" y="124" width="2" height="3" fill="#888"/><rect x="2419.6" y="158" width="2" height="3" fill="#888"/>
<rect x="2440.4" y="136" width="2" height="9" fill="#777"/>
<rect x="2461.2" y="136" width="2" height="9" fill="#777"/>
<rect x="2482.0" y="136" width="2" height="9" fill="#777"/>
<rect x="2502.8" y="132" width="2" height="18" fill="#777"/>
<rect x="2523.6" y="136" width="2" height="9" fill="#777"/>
<rect x="2544.4" y="136" width="2" height="9" fill="#777"/>
<rect x="2565.2" y="136" width="2" height="9" fill="#777"/>
<text x="2587.0" y="149" font-size="22" fill="#3c3c3c" text-anchor="middle" font-family="Liberation Sans">10</text>
<rect x="2586.0" y="124" width="2" height="3" fill="#888"/><rect x="2586.0" y="158" width="2" height="3" fill="#888"/>
<rect x="2606.8" y="136" width="2" height="9" fill="#777"/>
<path d="M913 123h24v7l-12 12-12-12z" fill="#eee" stroke="#444" stroke-width="2"/>
<path d="M913 163h24v-7l-12-12-12 12z" fill="#eee" stroke="#444" stroke-width="2"/>
<path d="M2142 124v19" stroke="#444" stroke-width="2"/>
<path d="M2130 163v-8l12-11 12 11v8z" fill="#eee" stroke="#444" stroke-width="2"/>
<rect x="462" y="172" width="38" height="1310" fill="#f6f6f6"/>
<path d="M463 172v13h37v-13" fill="none" stroke="#8a8a8a" stroke-width="2"/>
<rect x="474" y="204.3" width="10" height="2" fill="#777"/>
<rect x="474" y="225.1" width="10" height="2" fill="#777"/>
<rect x="474" y="245.9" width="10" height="2" fill="#777"/>
<rect x="470" y="266.7" width="18" height="2" fill="#777"/>
<rect x="474" y="287.5" width="10" height="2" fill="#777"/>
<rect x="474" y="308.3" width="10" height="2" fill="#777"/>
<rect x="474" y="329.1" width="10" height="2" fill="#777"/>
<text x="0" y="0" transform="translate(488 350.9) rotate(-90)" font-size="24" fill="#3c3c3c" text-anchor="middle" font-family="Liberation Sans">1</text>
<rect x="462" y="349.9" width="4" height="2" fill="#888"/><rect x="496" y="349.9" width="4" height="2" fill="#888"/>
<rect x="474" y="370.7" width="10" height="2" fill="#777"/>
<rect x="474" y="391.5" width="10" height="2" fill="#777"/>
<rect x="474" y="412.3" width="10" height="2" fill="#777"/>
<rect x="470" y="433.1" width="18" height="2" fill="#777"/>
<rect x="474" y="453.9" width="10" height="2" fill="#777"/>
<rect x="474" y="474.7" width="10" height="2" fill="#777"/>
<rect x="474" y="495.5" width="10" height="2" fill="#777"/>
<text x="0" y="0" transform="translate(488 517.3) rotate(-90)" font-size="24" fill="#3c3c3c" text-anchor="middle" font-family="Liberation Sans">2</text>
<rect x="462" y="516.3" width="4" height="2" fill="#888"/><rect x="496" y="516.3" width="4" height="2" fill="#888"/>
<rect x="474" y="537.1" width="10" height="2" fill="#777"/>
<rect x="474" y="557.9" width="10" height="2" fill="#777"/>
<rect x="474" y="578.7" width="10" height="2" fill="#777"/>
<rect x="470" y="599.5" width="18" height="2" fill="#777"/>
<rect x="474" y="620.2" width="10" height="2" fill="#777"/>
<rect x="474" y="641.0" width="10" height="2" fill="#777"/>
<rect x="474" y="661.8" width="10" height="2" fill="#777"/>
<text x="0" y="0" transform="translate(488 683.6) rotate(-90)" font-size="24" fill="#3c3c3c" text-anchor="middle" font-family="Liberation Sans">3</text>
<rect x="462" y="682.6" width="4" height="2" fill="#888"/><rect x="496" y="682.6" width="4" height="2" fill="#888"/>
<rect x="474" y="703.4" width="10" height="2" fill="#777"/>
<rect x="474" y="724.2" width="10" height="2" fill="#777"/>
<rect x="474" y="745.0" width="10" height="2" fill="#777"/>
<rect x="470" y="765.8" width="18" height="2" fill="#777"/>
<rect x="474" y="786.6" width="10" height="2" fill="#777"/>
<rect x="474" y="807.4" width="10" height="2" fill="#777"/>
<rect x="474" y="828.2" width="10" height="2" fill="#777"/>
<text x="0" y="0" transform="translate(488 850.0) rotate(-90)" font-size="24" fill="#3c3c3c" text-anchor="middle" font-family="Liberation Sans">4</text>
<rect x="462" y="849.0" width="4" height="2" fill="#888"/><rect x="496" y="849.0" width="4" height="2" fill="#888"/>
<rect x="474" y="869.8" width="10" height="2" fill="#777"/>
<rect x="474" y="890.6" width="10" height="2" fill="#777"/>
<rect x="474" y="911.4" width="10" height="2" fill="#777"/>
<rect x="470" y="932.2" width="18" height="2" fill="#777"/>
<rect x="474" y="953.0" width="10" height="2" fill="#777"/>
<rect x="474" y="973.8" width="10" height="2" fill="#777"/>
<rect x="474" y="994.6" width="10" height="2" fill="#777"/>
<text x="0" y="0" transform="translate(488 1016.4) rotate(-90)" font-size="24" fill="#3c3c3c" text-anchor="middle" font-family="Liberation Sans">5</text>
<rect x="462" y="1015.4" width="4" height="2" fill="#888"/><rect x="496" y="1015.4" width="4" height="2" fill="#888"/>
<rect x="474" y="1036.2" width="10" height="2" fill="#777"/>
<rect x="474" y="1057.0" width="10" height="2" fill="#777"/>
<rect x="474" y="1077.8" width="10" height="2" fill="#777"/>
<rect x="470" y="1098.6" width="18" height="2" fill="#777"/>
<rect x="474" y="1119.4" width="10" height="2" fill="#777"/>
<rect x="474" y="1140.2" width="10" height="2" fill="#777"/>
<rect x="474" y="1161.0" width="10" height="2" fill="#777"/>
<text x="0" y="0" transform="translate(488 1182.8) rotate(-90)" font-size="24" fill="#3c3c3c" text-anchor="middle" font-family="Liberation Sans">6</text>
<rect x="462" y="1181.8" width="4" height="2" fill="#888"/><rect x="496" y="1181.8" width="4" height="2" fill="#888"/>
<rect x="474" y="1202.6" width="10" height="2" fill="#777"/>
<rect x="474" y="1223.4" width="10" height="2" fill="#777"/>
<rect x="474" y="1244.2" width="10" height="2" fill="#777"/>
<rect x="470" y="1265.0" width="18" height="2" fill="#777"/>
<rect x="474" y="1285.8" width="10" height="2" fill="#777"/>
<rect x="474" y="1306.6" width="10" height="2" fill="#777"/>
<rect x="474" y="1327.4" width="10" height="2" fill="#777"/>
<text x="0" y="0" transform="translate(488 1349.2) rotate(-90)" font-size="24" fill="#3c3c3c" text-anchor="middle" font-family="Liberation Sans">7</text>
<rect x="462" y="1348.2" width="4" height="2" fill="#888"/><rect x="496" y="1348.2" width="4" height="2" fill="#888"/>
<rect x="474" y="1369.0" width="10" height="2" fill="#777"/>
<rect x="474" y="1389.8" width="10" height="2" fill="#777"/>
<rect x="474" y="1410.6" width="10" height="2" fill="#777"/>
<rect x="470" y="1431.3" width="18" height="2" fill="#777"/>
<rect x="474" y="1452.1" width="10" height="2" fill="#777"/>
<rect x="474" y="1472.9" width="10" height="2" fill="#777"/>
</svg>
<!-- document page content -->
<svg style="left:0;top:0" width="2636" height="1482" viewBox="0 0 2636 1482">
<rect x="971" y="177" width="63" height="63" fill="#fff"/>
<g fill="#f5191a">
<path d="M971 177H1034V187C1015 181 990 184 971 193Z"/>
<path d="M971 198C990 188 1015 186 1022 206C1010 194 990 197 971 207Z"/>
<path d="M971 212C988 204 1008 203 1012 218C1002 210 988 212 971 220Z"/>
<path d="M971 224C985 218 1000 217 1003 228C995 222 985 224 971 231Z"/>
<path d="M971 234C982 229 992 229 995 237C988 233 980 235 971 240Z"/>
<path d="M977 240C982 237 987 237 990 240Z"/>
<path d="M1034 205V240H993C1012 232 1026 222 1034 205Z"/>
</g>
<g stroke="#1a1a1a" stroke-width="1.5" fill="none">
<path d="M925.5 459v316.5H1981V459z"/>
<path d="M925 512H1981M925 565H1981M925 671H1981"/>
</g>
</svg>
<div class="a" style="left:925px;top:262px;font-size:31px;letter-spacing:2px;color:#000;font-weight:normal">ACCESS</div>
<div class="a" style="left:940px;top:473px;font-size:26px;font-weight:bold;color:#000;line-height:30px">Sample Data</div>
<div class="a" style="left:940px;top:526px;font-size:26px;font-weight:bold;color:#000;line-height:30px">Prepared by</div>
<div class="a" style="left:940px;top:579px;font-size:26px;font-weight:bold;color:#000;line-height:30px">Created with</div>
<div class="a" style="left:940px;top:683px;font-size:26px;font-weight:bold;color:#000;line-height:30px">Features</div>
<div class="a" style="left:925px;top:819px;font-size:31px;font-weight:bold;color:#777;line-height:36px">Overview</div>
<div class="a" style="left:925px;top:869px;width:1200px;font-size:25px;color:#000;line-height:29px;white-space:nowrap">This sample consists of a simple form</div>
<div class="a" style="left:1600px;top:869px;width:398px;text-align:right;font-size:25px;color:#000;line-height:29px;white-space:nowrap">tains eight</div>
<div class="a" style="left:925px;top:898px;font-size:25px;color:#000;line-height:29px;white-space:nowrap">separate records.</div>
<div class="a" style="left:925px;top:942px;font-size:25px;color:#000;line-height:29px;white-space:nowrap">By default, the data file will produce</div>
<div class="a" style="left:1600px;top:942px;width:379px;text-align:right;font-size:25px;color:#000;line-height:29px;white-space:nowrap">selective</div>
<div class="a" style="left:925px;top:971px;font-size:25.5px;color:#000;line-height:29px;white-space:nowrap">use of the bookmark file will produce the same PDF with a separate pane containing</div>
<div class="a" style="left:925px;top:1000px;font-size:25.5px;color:#000;line-height:29px;white-space:nowrap">bookmarks. This screenshot of the sample output shows a PDF file with bookmarks.</div>

<!-- Acrobat reader screenshot -->
<div class="a" style="left:925px;top:1043px;width:1073px;height:439px;background:#c0c0c0;border-left:2px solid #111;border-right:2px solid #111;border-top:1px solid #111"></div>
<div class="a" style="left:927px;top:1044px;width:1069px;height:27px;background:#000080"></div>
<svg style="left:0;top:0" width="2636" height="1482" viewBox="0 0 2636 1482">
<!-- title icon -->
<rect x="931" y="1047" width="22" height="21" fill="#f0d0c8" stroke="#d04020" stroke-width="2"/>
<path d="M936 1063c3-5 6-10 6-14M942 1056l8 5M940 1058l-4 5" stroke="#e02010" stroke-width="2" fill="none"/>
<!-- menu bar -->
<rect x="927" y="1102" width="1069" height="2" fill="#e8e8e8"/>
<path d="M937 1082h20v16h-20z" fill="#fff" stroke="#222" stroke-width="1.5"/>
<rect x="933" y="1078" width="16" height="5" fill="#e03010"/>
<path d="M940 1095c4-4 7-8 9-12M949 1090l6 4" stroke="#888" stroke-width="1" fill="none"/>
<!-- toolbar icons -->
<g fill="#ff1010"><path d="M934 1112h8l-6 20h-2z"/><path d="M948 1112h8v20h-2z"/><path d="M941 1132l3.5-12 3.5 12h-3l-0.5-2.5-1 2.5z"/></g>
<circle cx="979" cy="1124" r="11" fill="#1a40d0"/>
<path d="M970 1118c4-2 8 0 9 4s-3 8-6 8c-2-4-5-6-3-12z" fill="#22cc22"/>
<path d="M977 1112h15v12h-15z" fill="#fff" stroke="#333" stroke-width="1.2"/>
<rect x="975" y="1111" width="12" height="3" fill="#e02020"/>
<path d="M989 1134l3 3 3-3z" fill="#111"/>
<g fill="#808080"><rect x="1003" y="1106" width="1.5" height="35"/><rect x="1081" y="1106" width="1.5" height="35"/><rect x="1125" y="1106" width="1.5" height="35"/><rect x="1204" y="1106" width="1.5" height="35"/><rect x="1248" y="1106" width="1.5" height="35"/><rect x="1396" y="1106" width="1.5" height="35"/><rect x="1475" y="1106" width="1.5" height="35"/><rect x="1588" y="1106" width="1.5" height="35"/><rect x="1667" y="1106" width="1.5" height="35"/><rect x="1709" y="1106" width="1.5" height="35"/></g>
<g fill="#f4f4f4"><rect x="1004.5" y="1106" width="1.5" height="35"/><rect x="1082.5" y="1106" width="1.5" height="35"/><rect x="1126.5" y="1106" width="1.5" height="35"/><rect x="1205.5" y="1106" width="1.5" height="35"/><rect x="1249.5" y="1106" width="1.5" height="35"/><rect x="1397.5" y="1106" width="1.5" height="35"/><rect x="1476.5" y="1106" width="1.5" height="35"/><rect x="1589.5" y="1106" width="1.5" height="35"/><rect x="1668.5" y="1106" width="1.5" height="35"/><rect x="1710.5" y="1106" width="1.5" height="35"/></g>
<!-- open -->
<path d="M1012 1118h9l2 2h9v4h-14l-5 10h-1z" fill="#fff" stroke="#111" stroke-width="1.5"/>
<path d="M1017 1124h19l-5 10h-19z" fill="#808080" stroke="#111" stroke-width="1.5"/>
<!-- print -->
<path d="M1052 1113h14l-4 8h-14z" fill="#fff" stroke="#111" stroke-width="1.6"/>
<path d="M1053 1116h10M1052 1118.5h10" stroke="#aaa" stroke-width="1"/>
<path d="M1048 1121h21l2 3v7l-2 3h-21l-2-3v-7z" fill="#e4e4e4" stroke="#111" stroke-width="1.6"/>
<path d="M1047 1125h23" stroke="#fff" stroke-width="1"/>
<!-- panel -->
<rect x="1091" y="1113" width="23" height="19" fill="#fff" stroke="#111" stroke-width="1.5"/>
<rect x="1097" y="1113" width="1.5" height="19" fill="#111"/>
<path d="M1101 1117h10M1101 1121h3M1106 1121h5M1101 1125h10M1101 1129h10" stroke="#111" stroke-width="1.5"/>
<!-- hand pressed -->
<path d="M1130 1141v-35h33" fill="none" stroke="#222" stroke-width="1.5"/>
<path d="M1163 1106v35h-33" fill="none" stroke="#f0f0f0" stroke-width="1.5"/>
<path d="M1141 1137l-7-10c-1-2 1-4 3-3l4 4v-13c0-2 3-2 3 0v8-11c0-2 3-2 3 0v11-10c0-2 3-2 3 0v10-7c0-2 3-2 3 0v12c0 4-2 7-4 9z" fill="#fff" stroke="#111" stroke-width="1.5"/>
<!-- zoom -->
<circle cx="1176" cy="1118" r="5.5" fill="#fff" stroke="#111" stroke-width="2"/>
<path d="M1180 1122l11 11" stroke="#111" stroke-width="3"/><circle cx="1176" cy="1118" r="1.5" fill="#111"/>
<path d="M1192 1132l3 3-3 1z" fill="#111"/>
<!-- text select -->
<text x="1213" y="1135" font-family="Liberation Serif" font-size="28" fill="#111">T</text>
<rect x="1229" y="1124" width="10" height="10" fill="none" stroke="#111" stroke-width="1.5" stroke-dasharray="2 2"/>
<!-- nav -->
<rect x="1262" y="1113" width="2.5" height="20" fill="#8a8a8a"/><path d="M1278 1113v20l-12-10z" fill="#8a8a8a"/>
<path d="M1310 1113v20l-11-10z" fill="#8a8a8a"/>
<path d="M1333 1113v20l11-10z" fill="#111"/>
<path d="M1366 1113v20l11-10z" fill="#111"/><rect x="1378.5" y="1113" width="3" height="20" fill="#111"/>
<path d="M1408 1123l9-9v5h10v9h-10v5z" fill="#8a8a8a"/>
<path d="M1462 1123l-9-9v5h-10v9h10v5z" fill="#8a8a8a"/>
<!-- page views -->
<path d="M1487 1113h11l6 6v16h-17z" fill="#fff" stroke="#111" stroke-width="2.5"/>
<rect x="1520" y="1112" width="23" height="23" fill="none" stroke="#111" stroke-width="1.5"/>
<path d="M1524 1116h10l5 5v10h-15z" fill="#fff" stroke="#111" stroke-width="2.5"/>
<path d="M1549 1141v-35h34" fill="none" stroke="#222" stroke-width="1.5"/>
<path d="M1583 1106v35h-34" fill="none" stroke="#f0f0f0" stroke-width="1.5"/>
<rect x="1554" y="1112" width="25" height="25" fill="none" stroke="#111" stroke-width="1.5"/>
<path d="M1558 1117h11l6 6v14h-17z" fill="#fff" stroke="#111" stroke-width="2.5"/>
<!-- rotate -->
<path d="M1600 1124c0-6 5-10 10-9" fill="none" stroke="#111" stroke-width="2.5"/><path d="M1597 1121l4 6 4-6z" fill="#111"/>
<rect x="1607" y="1126" width="14" height="9" fill="#fff" stroke="#111" stroke-width="1.5"/>
<path d="M1610 1116h7l3 3v5h-10z" fill="none" stroke="#999" stroke-width="1"/>
<path d="M1656 1124c0-6-5-10-10-9" fill="none" stroke="#111" stroke-width="2.5"/><path d="M1659 1121l-4 6-4-6z" fill="#111"/>
<rect x="1633" y="1126" width="14" height="9" fill="#fff" stroke="#111" stroke-width="1.5"/>
<path d="M1635 1116h7l3 3v5h-10z" fill="none" stroke="#999" stroke-width="1"/>
<!-- binoculars -->
<path d="M1678 1131l3-14h4v-4h3v4h2l1 14z" fill="#111"/><path d="M1689 1131l1-14h2v-4h3v4h4l3 14z" fill="#111"/>
<rect x="1681" y="1125" width="2" height="3" fill="#fff"/><rect x="1694" y="1125" width="2" height="3" fill="#fff"/>
<!-- dark bar under toolbar -->
<rect x="927" y="1143" width="1069" height="4" fill="#202020"/>
<rect x="1232" y="1147" width="764" height="6" fill="#808080"/>
<!-- left pane -->
<rect x="927" y="1147" width="305" height="24" fill="#c0c0c0"/>
<path d="M1046 1149h97l22 22h-112z" fill="#c0c0c0" stroke="#111" stroke-width="1.5"/>
<path d="M935 1171v-22h99l20 22z" fill="#fff"/>
<path d="M935 1171v-22h99l20 22" fill="none" stroke="#111" stroke-width="1.5"/>
<rect x="1212" y="1147" width="18" height="24" fill="#c0c0c0" stroke="#111" stroke-width="1"/>
<path d="M1217 1152v14l8-7z" fill="#111"/>
<rect x="927" y="1170" width="305" height="2" fill="#111"/>
<rect x="929" y="1172" width="283" height="310" fill="#fff"/>
<rect x="927" y="1147" width="3" height="335" fill="#808080"/>
<rect x="1212" y="1172" width="19" height="310" fill="#d0d0d0"/>
<rect x="1212" y="1172" width="18" height="18" fill="#c0c0c0" stroke="#808080" stroke-width="1"/>
<path d="M1216 1185h10l-5-5z" fill="#909090"/>
<rect x="1231" y="1147" width="9" height="335" fill="#c0c0c0"/>
<rect x="1232" y="1153" width="1.5" height="329" fill="#f0f0f0"/>
<rect x="1240" y="1147" width="8" height="335" fill="#808080"/>
<rect x="1246" y="1153" width="2" height="329" fill="#111"/>
<rect x="1248" y="1153" width="748" height="329" fill="#fff"/>
<rect x="1248" y="1153" width="748" height="1.5" fill="#111"/>
<!-- inner page box -->
<path d="M1287.5 1482v-204H1996" fill="none" stroke="#222" stroke-width="1.8"/>
<!-- tree -->
<rect x="938" y="1180" width="12" height="12" fill="#fff" stroke="#777" stroke-width="1.2"/>
<rect x="941" y="1185.5" width="6" height="1.5" fill="#111"/>
<path d="M950 1186h15M974 1199V1403" stroke="#555" stroke-width="1" stroke-dasharray="1.5 1.5"/>
<path d="M966 1175h12l5 5v19h-17z" fill="#fff" stroke="#111" stroke-width="1.5"/>
<path d="M975 1214.0h20" stroke="#555" stroke-width="1" stroke-dasharray="1.5 1.5"/>
<path d="M996 1203.0h12l5 5v19h-17z" fill="#fff" stroke="#111" stroke-width="1.5"/>
<path d="M975 1241.3h20" stroke="#555" stroke-width="1" stroke-dasharray="1.5 1.5"/>
<path d="M996 1230.3h12l5 5v19h-17z" fill="#fff" stroke="#111" stroke-width="1.5"/>
<path d="M975 1268.6h20" stroke="#555" stroke-width="1" stroke-dasharray="1.5 1.5"/>
<path d="M996 1257.6h12l5 5v19h-17z" fill="#fff" stroke="#111" stroke-width="1.5"/>
<path d="M975 1295.9h20" stroke="#555" stroke-width="1" stroke-dasharray="1.5 1.5"/>
<path d="M996 1284.9h12l5 5v19h-17z" fill="#fff" stroke="#111" stroke-width="1.5"/>
<path d="M975 1323.2h20" stroke="#555" stroke-width="1" stroke-dasharray="1.5 1.5"/>
<path d="M996 1312.2h12l5 5v19h-17z" fill="#fff" stroke="#111" stroke-width="1.5"/>
<path d="M975 1350.5h20" stroke="#555" stroke-width="1" stroke-dasharray="1.5 1.5"/>
<path d="M996 1339.5h12l5 5v19h-17z" fill="#fff" stroke="#111" stroke-width="1.5"/>
<path d="M975 1377.8h20" stroke="#555" stroke-width="1" stroke-dasharray="1.5 1.5"/>
<path d="M996 1366.8h12l5 5v19h-17z" fill="#fff" stroke="#111" stroke-width="1.5"/>
<path d="M975 1405.1h20" stroke="#555" stroke-width="1" stroke-dasharray="1.5 1.5"/>
<path d="M996 1394.1h12l5 5v19h-17z" fill="#fff" stroke="#111" stroke-width="1.5"/>
</svg>
<div class="a" style="left:957px;top:1046px;font-size:18px;font-weight:bold;color:#fff;line-height:22px;letter-spacing:0px;white-space:nowrap">Acrobat Reader - [ap_bookmark.pdf]</div>
<div class="a" style="left:967px;top:1076px;font-size:18.5px;color:#111;line-height:22px;white-space:nowrap;letter-spacing:-0.9px">File</div>
<div class="a" style="left:1009px;top:1076px;font-size:18.5px;color:#111;line-height:22px;white-space:nowrap;letter-spacing:-0.9px">Edit</div>
<div class="a" style="left:1054px;top:1076px;font-size:18.5px;color:#111;line-height:22px;white-space:nowrap;letter-spacing:-0.9px">Document</div>
<div class="a" style="left:1146px;top:1076px;font-size:18.5px;color:#111;line-height:22px;white-space:nowrap;letter-spacing:-0.9px">View</div>
<div class="a" style="left:1199px;top:1076px;font-size:18.5px;color:#111;line-height:22px;white-space:nowrap;letter-spacing:-0.9px">Window</div>
<div class="a" style="left:1277px;top:1076px;font-size:18.5px;color:#111;line-height:22px;white-space:nowrap;letter-spacing:-0.9px">Help</div>
<div class="a" style="left:944px;top:1150px;font-size:15.5px;font-weight:bold;color:#111;line-height:20px;letter-spacing:0.6px">Bookmarks</div>
<div class="a" style="left:1056px;top:1151px;font-size:14px;color:#111;line-height:20px">Thumbnails</div>
<div class="a" style="left:989px;top:1175px;font-size:21px;font-weight:bold;color:#111;line-height:24px;letter-spacing:-1.6px;white-space:nowrap">Invoices by Date</div>
<div class="a" style="left:1020px;top:1202.0px;font-size:20px;font-weight:bold;color:#111;line-height:24px;letter-spacing:-0.6px">2000-01-1</div>
<div class="a" style="left:1020px;top:1229.3px;font-size:20px;font-weight:normal;color:#111;line-height:24px;letter-spacing:-0.6px">2000-01-2</div>
<div class="a" style="left:1020px;top:1256.6px;font-size:20px;font-weight:normal;color:#111;line-height:24px;letter-spacing:-0.6px">2000-01-3</div>
<div class="a" style="left:1020px;top:1283.9px;font-size:20px;font-weight:normal;color:#111;line-height:24px;letter-spacing:-0.6px">2000-01-4</div>
<div class="a" style="left:1020px;top:1311.2px;font-size:20px;font-weight:normal;color:#111;line-height:24px;letter-spacing:-0.6px">2000-01-5</div>
<div class="a" style="left:1020px;top:1338.5px;font-size:20px;font-weight:normal;color:#111;line-height:24px;letter-spacing:-0.6px">2000-01-6</div>
<div class="a" style="left:1020px;top:1365.8px;font-size:20px;font-weight:normal;color:#111;line-height:24px;letter-spacing:-0.6px">2000-01-7</div>
<div class="a" style="left:1020px;top:1393.1px;font-size:20px;font-weight:normal;color:#111;line-height:24px;letter-spacing:-0.6px">2000-01-8</div>
<div class="a" style="left:1325px;top:1315px;font-family:'Liberation Mono',monospace;font-size:25.5px;color:#444;line-height:28px;white-space:pre">Date</div>
<div class="a" style="left:1325px;top:1377px;font-family:'Liberation Mono',monospace;font-size:25.5px;color:#444;line-height:28px;white-space:pre">Description</div>
<div class="a" style="left:1325px;top:1440px;font-family:'Liberation Mono',monospace;font-size:25.5px;color:#444;line-height:28px;white-space:pre">Type</div>
<div class="a" style="left:1530px;top:1315px;font-family:'Liberation Mono',monospace;font-size:25.5px;color:#444;line-height:28px;white-space:pre">2000-01-1</div>
<div class="a" style="left:1530px;top:1377px;font-family:'Liberation Mono',monospace;font-size:25.5px;color:#444;line-height:28px;white-space:pre">Description for item # 1</div>
<div class="a" style="left:1530px;top:1440px;font-family:'Liberation Mono',monospace;font-size:25.5px;color:#444;line-height:28px;white-space:pre">TYPE1</div>

<!-- Save dialog -->
<div class="a" style="left:1020px;top:227px;width:860px;height:749px;border-radius:19px;background:#fff;box-shadow:0 0 0 1px rgba(0,0,0,0.2),0 36px 100px 4px rgba(0,0,0,0.38),0 3px 10px rgba(0,0,0,0.10);overflow:hidden">
  <div class="a" style="left:0;top:0;width:860px;height:57px;background:#ededed"></div>
</div>
<div class="a" style="left:1020px;top:239px;width:860px;text-align:center;font-size:26px;font-weight:bold;color:#4a4a4a;line-height:30px">Save</div>
<div class="a" style="left:1050px;top:316px;width:202px;text-align:right;font-size:22.5px;color:#7b7b7b;line-height:26px">Save As:</div>
<div class="a" style="left:1050px;top:379px;width:202px;text-align:right;font-size:22.5px;color:#7b7b7b;line-height:26px">Tags:</div>
<div class="a" style="left:1050px;top:462px;width:202px;text-align:right;font-size:22.5px;color:#7b7b7b;line-height:26px">Where:</div>
<div class="a" style="left:1050px;top:556px;width:203px;text-align:right;font-size:27px;color:#262626;line-height:30px">File type:</div>
<!-- save as field -->
<div class="a" style="left:1264px;top:300px;width:478px;height:52px;border-radius:13px;background:#8cb1f6"></div>
<div class="a" style="left:1270px;top:306px;width:466px;height:40px;border-radius:8px;background:#fff;box-shadow:0 0 0 1px #6f98e6"></div>
<div class="a" style="left:1290px;top:310px;width:272px;height:32px;background:#b4d7ff"></div>
<div class="a" style="left:1290px;top:311px;font-size:26.6px;color:#000;line-height:30px;white-space:nowrap">c4611_sample_explain</div>
<!-- tags field -->
<div class="a" style="left:1270px;top:369px;width:466px;height:41px;border-radius:9px;background:#fff;box-shadow:0 0 0 1px rgba(0,0,0,0.08),0 1px 1.5px rgba(0,0,0,0.22)"></div>
<!-- where popup -->
<div class="a" style="left:1268px;top:453px;width:414px;height:41px;border-radius:10px;background:#fff;box-shadow:0 0 0 1px rgba(0,0,0,0.08),0 1px 1.5px rgba(0,0,0,0.25)"></div>
<svg style="left:0;top:0" width="2636" height="1482" viewBox="0 0 2636 1482">
<path d="M1286 464a2 2 0 0 1 2-2h8l3 3h13a2 2 0 0 1 2 2v3h-28z" fill="#3ea1dc"/>
<rect x="1286" y="467" width="28" height="21" rx="2" fill="#6fcaf4"/>
<circle cx="1300" cy="478" r="5" fill="#4aa6dc"/>
<path d="M1300 474v6M1297.5 478l2.5 2.5 2.5-2.5" stroke="#bfe8fb" stroke-width="1.3" fill="none"/>
</svg>
<div class="a" style="left:1325px;top:458px;font-size:26.4px;color:#222;line-height:30px">Downloads</div>
<div class="a" style="left:1646px;top:458px;width:32px;height:32px;border-radius:6px;background:linear-gradient(#3a92f8,#0b70f0)"></div>
<div class="a" style="left:1698px;top:453px;width:40px;height:41px;border-radius:10px;background:#fff;box-shadow:0 0 0 1px rgba(0,0,0,0.08),0 1px 1.5px rgba(0,0,0,0.25)"></div>
<!-- separators -->
<div class="a" style="left:1020px;top:536px;width:860px;height:1.5px;background:#dedede"></div>
<div class="a" style="left:1020px;top:854px;width:860px;height:1.5px;background:#dedede"></div>
<!-- file type popup -->
<div class="a" style="left:1269px;top:550px;width:483px;height:40px;border-radius:10px;background:#fff;box-shadow:0 0 0 1px rgba(0,0,0,0.08),0 1px 1.5px rgba(0,0,0,0.25)"></div>
<div class="a" style="left:1286px;top:555px;font-size:26.5px;color:#222;line-height:30px">ODF Drawing (.odg)</div>
<div class="a" style="left:1717px;top:554px;width:32px;height:32px;border-radius:6px;background:linear-gradient(#3a92f8,#0b70f0)"></div>
<svg style="left:0;top:0" width="2636" height="1482" viewBox="0 0 2636 1482">
<g fill="none" stroke="#fff" stroke-width="2.6" stroke-linecap="round" stroke-linejoin="round">
<path d="M1656 469l6-6 6 6M1656 479l6 6 6-6"/>
<path d="M1727 565l6-6 6 6M1727 575l6 6 6-6"/>
</g>
<path d="M1712 470l6 6 6-6" fill="none" stroke="#222" stroke-width="2.6" stroke-linecap="round" stroke-linejoin="round"/>
<!-- checkboxes -->
<rect x="1246" y="630" width="28" height="28" rx="6" fill="#1a7cf5"/>
<path d="M1252.5 644.5l5 6 9-13" fill="none" stroke="#fff" stroke-width="3" stroke-linecap="round" stroke-linejoin="round"/>
<rect x="1246.5" y="674.5" width="27" height="27" rx="6" fill="#fff" stroke="#c9c9c9" stroke-width="1.2"/>
<rect x="1246.5" y="718.5" width="27" height="27" rx="6" fill="#fff" stroke="#c9c9c9" stroke-width="1.2"/>
<rect x="1246.5" y="762.5" width="27" height="27" rx="6" fill="#fff" stroke="#e2e2e2" stroke-width="1.2"/>
<rect x="1246.5" y="806.5" width="27" height="27" rx="6" fill="#fff" stroke="#e2e2e2" stroke-width="1.2"/>
</svg>
<div class="a" style="left:1287px;top:629px;font-size:26.8px;color:#222;line-height:30px;letter-spacing:0.2px;white-space:nowrap">Automatic file name extension</div>
<div class="a" style="left:1287px;top:673px;font-size:26.8px;color:#222;line-height:30px;letter-spacing:0.2px;white-space:nowrap">Save with password</div>
<div class="a" style="left:1287px;top:717px;font-size:26.8px;color:#222;line-height:30px;letter-spacing:0.2px;white-space:nowrap">Encrypt with GPG key</div>
<div class="a" style="left:1287px;top:761px;font-size:26.8px;color:#bdbdbd;line-height:30px;letter-spacing:0.2px;white-space:nowrap">Sign with default certificate</div>
<div class="a" style="left:1287px;top:805px;font-size:26.8px;color:#bdbdbd;line-height:30px;letter-spacing:0.2px;white-space:nowrap">Edit filter settings</div>
<!-- buttons -->
<div class="a" style="left:1536px;top:896px;width:144px;height:41px;border-radius:9px;background:#fff;box-shadow:0 0 0 1px rgba(0,0,0,0.1),0 1px 2px rgba(0,0,0,0.25);text-align:center;font-size:26px;color:#222;line-height:41px">Cancel</div>
<div class="a" style="left:1696px;top:896px;width:144px;height:41px;border-radius:9px;background:linear-gradient(#2a8af8,#0a70f0);text-align:center;font-size:26px;color:#fff;line-height:41px">Save</div>

<!-- XDA watermark -->
<svg style="left:0;top:0" width="2636" height="1482" viewBox="0 0 2636 1482">
<defs><filter id="xsh" x="-20%" y="-20%" width="150%" height="160%"><feDropShadow dx="2" dy="3" stdDeviation="3" flood-color="#000" flood-opacity="0.55"/></filter></defs>
<g filter="url(#xsh)">
<path d="M2358 1372h24v9h-13v35h13v27l-12-18h-12z" fill="#e897a9"/>
<path d="M2392 1372h24v53h-24v-9h13v-35h-13z" fill="#8ccbea"/>
<path d="M2428 1372h11l17 19 17-19h11l-22 26.5 22 26.5h-11l-17-19-17 19h-11l22-26.5z" fill="#f3f3f3"/>
<path d="M2489 1372h43a10 10 0 0 1 10 10v33a10 10 0 0 1-10 10h-43zm9 9v35h35v-35z" fill="#f3f3f3" fill-rule="evenodd"/>
<path d="M2547 1382a10 10 0 0 1 10-10h33a10 10 0 0 1 10 10v43h-9v-18h-35v18h-9zm9 0v16h35v-16z" fill="#f3f3f3" fill-rule="evenodd"/>
</g>
</svg>
<!-- title pdf icon -->
<svg style="left:0;top:0" width="2636" height="50" viewBox="0 0 2636 50">
<path d="M1259 4a3 3 0 0 1 3-3h15l5 5v21a3 3 0 0 1-3 3h-17a3 3 0 0 1-3-3z" fill="#ebeae9" stroke="#c9c8c7" stroke-width="1"/>
<path d="M1266 19c2-3 4-7 4-10 0-2-2-2-2 0 0 3 4 7 8 8 2 0 2-2 0-2-3 0-8 2-10 4z" fill="none" stroke="#b0b0b0" stroke-width="0.9"/>
<text x="1270.5" y="27" font-size="5.5" fill="#a8a8a8" text-anchor="middle" font-family="Liberation Sans">PDF</text>
</svg>

</body></html>
